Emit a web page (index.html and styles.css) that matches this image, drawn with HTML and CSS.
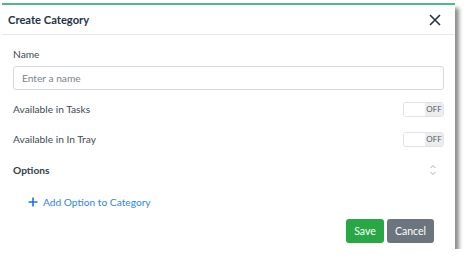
FILE: index.html
```html
<!DOCTYPE html>
<html>
<head>
<meta charset="utf-8">
<link rel="stylesheet" href="styles.css">
</head>
<body>
<div class="modal">
  <div class="modal-header">
    <span class="title">Create Category</span>
    <svg class="close" width="12" height="12" viewBox="0 0 12 12"><path d="M1 1L11 11M11 1L1 11" stroke="#2b3442" stroke-width="1.6" fill="none"/></svg>
  </div>
  <div class="modal-body">
    <div class="label">Name</div>
    <div class="input">Enter a name</div>
    <div class="row">
      <span class="label">Available in Tasks</span>
      <span class="toggle"><span class="knob"></span><span class="off">OFF</span></span>
    </div>
    <div class="row">
      <span class="label">Available in In Tray</span>
      <span class="toggle"><span class="knob"></span><span class="off">OFF</span></span>
    </div>
    <div class="row options">
      <span class="label strong">Options</span>
      <svg class="sort" width="8" height="12" viewBox="0 0 8 12"><path d="M1.5 4L4 1.5L6.5 4" stroke="#aab2bb" stroke-width="1" fill="none"/><path d="M1.5 8L4 10.5L6.5 8" stroke="#aab2bb" stroke-width="1" fill="none"/></svg>
    </div>
    <div class="add">
      <svg width="10" height="10" viewBox="0 0 10 10"><path d="M5 0.5V9.5M0.5 5H9.5" stroke="#1a73e8" stroke-width="1.6"/></svg>
      <span>Add Option to Category</span>
    </div>
  </div>
  <div class="modal-footer">
    <button class="btn save">Save</button>
    <button class="btn cancel">Cancel</button>
  </div>
</div>
</body>
</html>
```
FILE: styles.css
```css
html, body {
  margin: 0;
  padding: 0;
  background: #ffffff;
}
body {
  font-family: Lato, "Noto Sans", sans-serif;
  font-size: 10.2px;
  color: #3d4650;
  padding: 3px 0 0 2px;
}
.modal {
  width: 453px;
  background: #fff;
  border-top: 2px solid #4cbb87;
  box-shadow: 4px 5px 4px rgba(0,0,0,0.45);
  box-sizing: border-box;
}
.modal-header {
  height: 29px;
  display: flex;
  align-items: center;
  justify-content: space-between;
  padding: 0 14px 0 6px;
  border-bottom: 1px solid #e6e9ec;
}
.title {
  font-weight: 700;
  font-size: 11.2px;
  color: #243447;
}
.modal-body {
  padding: 12px 11px 0 11px;
}
.label {
  line-height: 14px;
  color: #414a54;
}
.label.strong {
  font-weight: 700;
  color: #333d48;
}
.input {
  margin-top: 5px;
  height: 24px;
  border: 1px solid #d6dadf;
  border-radius: 3px;
  box-sizing: border-box;
  padding: 0 8px;
  display: flex;
  align-items: center;
  color: #7b838c;
}
.row {
  display: flex;
  align-items: center;
  justify-content: space-between;
  height: 16px;
  margin-top: 11px;
}
.row + .row {
  margin-top: 14px;
}
.row.options {
  margin-top: 15px;
}
.toggle {
  display: flex;
  width: 41px;
  height: 15px;
  border: 1px solid #dfe2e6;
  border-radius: 3px;
  box-sizing: border-box;
  overflow: hidden;
}
.knob {
  width: 21px;
  background: #fff;
}
.off {
  flex: 1;
  background: #ebedef;
  font-size: 8px;
  line-height: 13px;
  text-align: center;
  color: #555d66;
}
.sort {
  margin-right: 7px;
}
.add {
  display: flex;
  align-items: center;
  gap: 5px;
  margin: 17px 0 0 15px;
  color: #2f86e0;
  line-height: 14px;
}
.modal-footer {
  display: flex;
  justify-content: flex-end;
  gap: 3px;
  padding: 10px 21px 6px 0;
}
.btn {
  font-family: Lato, "Noto Sans", sans-serif;
  font-size: 10.5px;
  height: 24px;
  border: none;
  border-radius: 3px;
  color: #fff;
  padding: 0;
}
.save {
  background: #28a745;
  width: 38px;
}
.cancel {
  background: #6c757d;
  width: 47px;
}
```
